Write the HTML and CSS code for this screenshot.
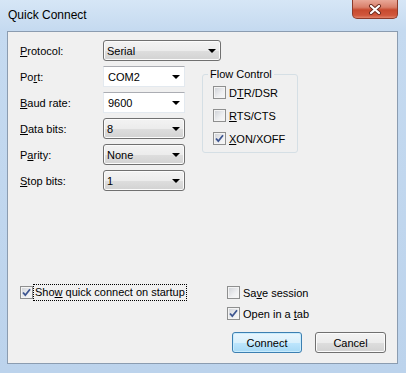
FILE: index.html
```html
<!DOCTYPE html>
<html lang="en">
<head>
    <meta charset="UTF-8">
    <title>Quick Connect</title>
    <link rel="stylesheet" href="styles.css">
</head>
<body>
    <div class="window">
        <div class="titlebar">
            <span class="title">Quick Connect</span>
            <div class="close">
                <svg width="14" height="11" viewBox="0 0 14 11">
                    <path d="M3 2 L11 9 M11 2 L3 9" stroke="#6b2a1e" stroke-width="4" stroke-linecap="round"/>
                    <path d="M3 2 L11 9 M11 2 L3 9" stroke="#fff" stroke-width="2.2" stroke-linecap="round"/>
                </svg>
            </div>
        </div>

        <div class="client">
            <div class="settings">
                <div class="lbl"><u>P</u>rotocol:</div>
                <div class="select wide"><span>Serial</span><i class="arrow"></i></div>

                <div class="lbl">Po<u>r</u>t:</div>
                <div class="combo"><span>COM2</span><i class="arrow"></i></div>

                <fieldset class="flow">
                    <legend>Flow Control</legend>
                    <div class="check"><span class="box"></span><span>D<u>T</u>R/DSR</span></div>
                    <div class="check"><span class="box"></span><span><u>R</u>TS/CTS</span></div>
                    <div class="check"><span class="box checked"><svg width="11" height="11" viewBox="0 0 11 11"><path d="M2 5.5 L4.3 8.2 L9 2.2" fill="none" stroke="#3d5590" stroke-width="1.8"/></svg></span><span><u>X</u>ON/XOFF</span></div>
                </fieldset>

                <div class="lbl"><u>B</u>aud rate:</div>
                <div class="combo"><span>9600</span><i class="arrow"></i></div>

                <div class="lbl"><u>D</u>ata bits:</div>
                <div class="select"><span>8</span><i class="arrow"></i></div>

                <div class="lbl">P<u>a</u>rity:</div>
                <div class="select"><span>None</span><i class="arrow"></i></div>

                <div class="lbl"><u>S</u>top bits:</div>
                <div class="select"><span>1</span><i class="arrow"></i></div>
            </div>

            <div class="bottom">
                <div class="check">
                    <span class="box checked"><svg width="11" height="11" viewBox="0 0 11 11"><path d="M2 5.5 L4.3 8.2 L9 2.2" fill="none" stroke="#3d5590" stroke-width="1.8"/></svg></span>
                    <span class="focus">Sho<u>w</u> quick connect on startup</span>
                </div>

                <div class="actions">
                    <div class="check"><span class="box"></span><span>Sa<u>v</u>e session</span></div>
                    <div class="check"><span class="box checked"><svg width="11" height="11" viewBox="0 0 11 11"><path d="M2 5.5 L4.3 8.2 L9 2.2" fill="none" stroke="#3d5590" stroke-width="1.8"/></svg></span><span>Open in a <u>t</u>ab</span></div>
                    <div class="buttons">
                        <div class="btn default">Connect</div>
                        <div class="btn cancel">Cancel</div>
                    </div>
                </div>
            </div>
        </div>
    </div>
</body>
</html>
```

FILE: styles.css
```css
body {
    margin: 0;
    width: 406px;
    height: 373px;
    overflow: hidden;
    font-family: "Liberation Sans", Arial, sans-serif;
    font-size: 11px;
    color: #000;
    background: linear-gradient(180deg, #d6e6f6 0, #c5daf0 30px, #bcd3ec 100%);
}
.window {
    height: 373px;
    box-sizing: border-box;
    padding: 0 8px 9px 7px;
    display: flex;
    flex-direction: column;
}
.titlebar {
    height: 31px;
    display: flex;
    align-items: flex-start;
}
.title {
    margin-top: 7px;
    margin-left: 1px;
    line-height: 16px;
    font-size: 12px;
}
.close {
    margin-left: auto;
    width: 46px;
    height: 19px;
    box-sizing: border-box;
    border: 1px solid #8c3b2b;
    border-top: none;
    border-radius: 0 0 5px 5px;
    background: linear-gradient(180deg, #e9a898 0, #d9806b 40%, #c74a2f 55%, #d0573c 85%, #e0836a 100%);
    display: flex;
    align-items: center;
    justify-content: center;
}
.client {
    flex: 1;
    border: 1px solid #8b9cb0;
    background-color: #f0f0f0;
    padding: 8px 11px 10px 12px;
    display: flex;
    flex-direction: column;
    justify-content: space-between;
}
.settings {
    display: grid;
    grid-template-columns: 83px 82px 1fr;
    grid-auto-rows: 21px;
    row-gap: 5px;
    align-items: center;
}
.lbl {
    grid-column: 1;
    line-height: 16px;
}
.lbl:nth-child(1) { grid-row: 1; }
.wide {
    grid-column: 2 / span 2;
    width: 118px;
}
.select,
.combo {
    height: 21px;
    box-sizing: border-box;
    display: flex;
    align-items: center;
    justify-content: space-between;
    padding: 0 4px 0 3px;
}
.select {
    border: 1px solid #707070;
    border-radius: 3px;
    background: linear-gradient(180deg, #f3f3f3 0, #ececec 50%, #dedede 51%, #d2d2d2 100%);
    box-shadow: inset 0 0 0 1px #fbfbfb;
}
.combo {
    background-color: #fff;
    border: 1px solid #e3e9ef;
    border-top-color: #abadb3;
    padding-left: 4px;
}
.arrow {
    width: 0;
    height: 0;
    border-left: 4px solid transparent;
    border-right: 4px solid transparent;
    border-top: 4px solid #000;
}
.flow {
    grid-column: 3;
    grid-row: 2 / span 4;
    align-self: start;
    margin: 1px 0 0 17px;
    width: 96px;
    height: 86px;
    box-sizing: border-box;
    border: 1px solid #d5dfe5;
    border-radius: 3px;
    padding: 0 4px 2px 10px;
    display: flex;
    flex-direction: column;
    gap: 2px;
}
.flow legend {
    margin-left: -5px;
    padding: 0 2px;
    line-height: 15px;
}
.check {
    height: 21px;
    display: flex;
    align-items: center;
    gap: 3px;
    white-space: nowrap;
}
.box {
    width: 13px;
    height: 13px;
    box-sizing: border-box;
    border: 1px solid #8e8f8f;
    background: linear-gradient(135deg, #cdd0d5 0, #eeeff1 60%, #f8f8f8 100%);
    box-shadow: inset 0 0 0 1px #f4f4f4;
    display: flex;
    align-items: center;
    justify-content: center;
    flex-shrink: 0;
}
.focus {
    outline: 1px dotted #000;
    padding: 0 1px;
    line-height: 15px;
    margin-left: -2px;
}
.bottom {
    display: flex;
    justify-content: space-between;
    align-items: flex-start;
}
.actions {
    width: 159px;
    display: flex;
    flex-direction: column;
}
.buttons {
    display: flex;
    gap: 13px;
    margin: 8px 0 0 5px;
}
.btn {
    height: 21px;
    box-sizing: border-box;
    border-radius: 3px;
    display: flex;
    align-items: center;
    justify-content: center;
}
.default {
    width: 70px;
    border: 1px solid #3c7fb1;
    background: linear-gradient(180deg, #eaf6fd 0, #d9f0fc 50%, #bee6fd 51%, #a7d9f5 100%);
    box-shadow: inset 0 0 0 1px #c9ecfd;
}
.cancel {
    width: 71px;
    border: 1px solid #707070;
    background: linear-gradient(180deg, #f3f3f3 0, #ececec 50%, #dedede 51%, #d2d2d2 100%);
    box-shadow: inset 0 0 0 1px #fbfbfb;
}
```
